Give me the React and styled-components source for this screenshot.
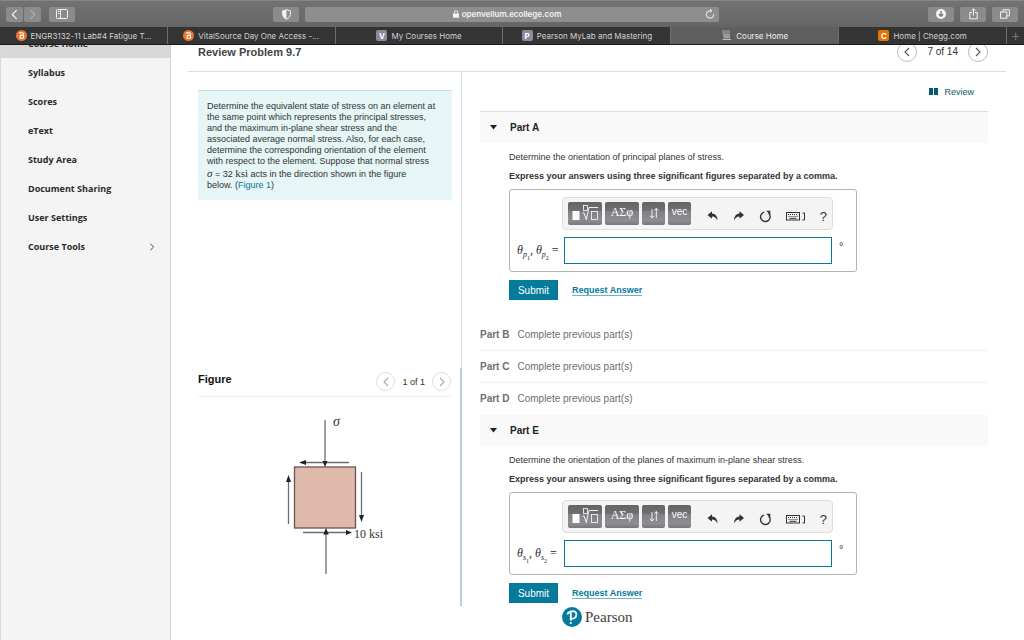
import React, { useState } from "react";
import styled, { createGlobalStyle } from "styled-components";

const GlobalStyle = createGlobalStyle`
    *{
        box-sizing: border-box;
    }

    body{
        margin: 0;
        background-color: white;
        color: #2b2b2b;
        font-family: "Liberation Sans", Arial, sans-serif;
        font-size: 9px;
        line-height: 12px;
    }

    button, input{
        font-family: inherit;
        margin: 0;
        padding: 0;
    }

    h1, h2, p, ul{
        margin: 0;
        padding: 0;
    }
`

// browser chrome
const Window = styled.div`
    display: flex;
    flex-direction: column;
    height: 100vh;
    overflow: hidden;
`

const Toolbar = styled.header`
    display: flex;
    flex: none;
    align-items: center;
    gap: 6px;
    height: 27px;
    padding: 0 6px;
    border-top: 1px solid #858585;
    background: linear-gradient(#727272, #656565);
`

const ToolGroup = styled.div`
    display: flex;
    flex: ${props => props.$grow} 1 0;
    gap: ${props => props.$gap};
    justify-content: ${props => props.$align || 'flex-end'};
`

const NavButtons = styled.div`
    display: flex;
    gap: 8px;
`

const NavPair = styled.div`
    display: flex;
    gap: 1px;
`

const ToolButton = styled.button`
    display: flex;
    align-items: center;
    justify-content: center;
    width: ${props => props.$small ? '17px' : '26px'};
    height: 15px;
    border: none;
    border-radius: 2px;
    background-color: #8b8b8b;
    color: ${props => props.$dim ? '#b0b0b0' : '#f2f2f2'};
`

const AddressBar = styled.div`
    display: flex;
    flex: 406 1 0;
    align-items: center;
    height: 15px;
    margin-right: -6px;
    padding: 0 4px;
    border-radius: 2px;
    background-color: #8e8e8e;
    color: #f4f4f4;
`

const Address = styled.span`
    display: flex;
    flex: 1;
    align-items: center;
    justify-content: center;
    gap: 3px;
    font-family: Inter, sans-serif;
    font-size: 8px;
    font-weight: 600;
`

const PlainButton = styled.button`
    display: flex;
    border: none;
    background: none;
    color: inherit;
`

const TabBar = styled.nav`
    display: flex;
    flex: none;
    height: 18px;
    border-bottom: 1px solid #1b1b1b;
    background-color: #343434;
`

const Tab = styled.a`
    display: flex;
    flex: 1 1 0;
    align-items: center;
    justify-content: center;
    gap: 4px;
    min-width: 0;
    border-right: 1px solid #6d6d6d;
    background-color: ${props => props.$active ? '#5e5e5e' : 'transparent'};
    color: ${props => props.$active ? '#eeeeee' : '#d2d2d2'};
    font-family: Inter, sans-serif;
    font-size: 8px;
    font-weight: 400;
    text-decoration: none;
    white-space: nowrap;
`

const NewTab = styled.button`
    width: 17px;
    border: none;
    background: none;
    color: #777777;
    font-size: 14px;
    line-height: 16px;
`

// page
const Page = styled.div`
    display: flex;
    flex: 1;
    min-height: 0;
    overflow: hidden;
`

const Sidebar = styled.nav`
    flex: none;
    width: 171px;
    border-left: 1px solid #dadada;
    border-right: 1px solid #d2d2d2;
    background-color: #f4f4f4;

    & ul{
        margin-top: -16px;
        list-style: none;
    }
`

const MenuLink = styled.a`
    display: flex;
    align-items: center;
    justify-content: space-between;
    height: 29px;
    padding: 0 14px 0 27px;
    background-color: ${props => props.$current ? '#d8d8d8' : 'transparent'};
    color: #2a2a2a;
    font-family: "Open Sans", sans-serif;
    font-size: 9px;
    font-weight: 700;
    text-decoration: none;
`

const Main = styled.main`
    flex: 1;
    min-width: 0;
    padding: 0 18px 0 17px;
`

const TitleRow = styled.div`
    display: flex;
    align-items: center;
    justify-content: space-between;
    height: 40px;
    margin-top: -13px;
    padding: 0 18px 0 10px;
    border-bottom: 1px solid #dcdcdc;
`

const Title = styled.h1`
    color: #444444;
    font-size: 11px;
    font-weight: 700;
`

const Pager = styled.div`
    display: flex;
    align-items: center;
    gap: ${props => props.$small ? '7px' : '10px'};
    color: #333333;
    font-size: ${props => props.$small ? '9px' : '10px'};
`

const RoundButton = styled.button`
    display: flex;
    align-items: center;
    justify-content: center;
    width: ${props => props.$small ? '19px' : '20px'};
    height: ${props => props.$small ? '19px' : '20px'};
    border: 1px solid ${props => props.$small ? '#dedede' : '#bcbcbc'};
    border-radius: 50%;
    background-color: white;
    color: ${props => props.$small ? '#aaaaaa' : '#555555'};
`

const Columns = styled.div`
    display: flex;
    align-items: flex-start;
`

const LeftColumn = styled.div`
    flex: none;
    width: 274px;
`

const ProblemPane = styled.section`
    height: 296px;
    padding: 18px 9px 0 10px;
    border-right: 1px solid #d9dfe8;
`

const Serif = styled.span`
    font-family: "Liberation Serif", "Times New Roman", serif;
    font-size: ${props => props.$size || '11px'};
    font-style: ${props => props.$italic ? 'italic' : 'normal'};
`

const Problem = styled.p`
    padding: 10px 14px 9px 9px;
    border-top: 1px solid #d0dada;
    background-color: #e6f5f5;
    color: #333333;
    line-height: 11px;

    & ${Serif}{
        line-height: 13px;
    }
`

const FigureLink = styled.a`
    color: #047a9c;
    text-decoration: none;
`

const FigurePane = styled.section`
    height: 238px;
    padding: 4px 9px 0 10px;
    border-right: 2px solid #bccbdc;
`

const FigureHead = styled.div`
    display: flex;
    align-items: flex-start;
    justify-content: space-between;
    height: 25px;
    border-bottom: 1px solid #eeeeee;

    & h2{
        padding-top: 1px;
        color: #111111;
        font-size: 11px;
    }
`

const Drawing = styled.svg`
    display: block;
    margin: 18px 0 0 87px;
`

const RightColumn = styled.div`
    flex: 1;
    min-width: 0;
    padding: 0 18px 0 18px;
`

const ReviewRow = styled.div`
    display: flex;
    align-items: center;
    justify-content: flex-end;
    height: 39px;
    padding-right: 14px;

    & a{
        display: flex;
        align-items: center;
        gap: 6px;
        color: #055b70;
        text-decoration: none;
    }
`

const PartHead = styled.h2`
    border-top: ${props => props.$line ? '1px solid #dcdcdc' : 'none'};
    background-color: #f9f9f9;

    & button{
        display: flex;
        align-items: center;
        gap: 13px;
        width: 100%;
        height: 31px;
        padding-left: 10px;
        border: none;
        background: none;
        color: #222222;
        font-size: 10px;
        font-weight: 700;
    }
`

const PartBody = styled.form`
    padding: 8px 0 0 29px;
`

const Question = styled.p`
    margin-bottom: 7px;
    color: #333333;
    font-weight: ${props => props.$bold ? 700 : 400};
`

const AnswerBox = styled.div`
    display: grid;
    grid-template-columns: 45px 1fr 16px;
    row-gap: 7px;
    max-width: 348px;
    padding: 7px;
    border: 1px solid #b3b3b3;
    border-radius: 3px;
`

const MathBar = styled.div`
    display: flex;
    grid-column: 2;
    align-items: center;
    justify-content: space-between;
    height: 33px;
    padding: 0 5px;
    border: 1px solid #dedede;
    border-radius: 4px;
    background-color: #f4f4f4;
`

const MathKeys = styled.div`
    display: flex;
    gap: 3px;
`

const MathKey = styled.button`
    display: flex;
    justify-content: center;
    width: ${props => props.$wide ? '34px' : '23px'};
    height: 23px;
    padding-top: 3px;
    border: none;
    border-radius: 2px;
    background: linear-gradient(#646466 0%, #717174 40%, #808086 41%, #8d8d94 80%, #77777b 100%);
    color: white;
    font-size: 10px;
    line-height: 14px;
`

const MathTools = styled.div`
    display: flex;
    align-items: center;
    gap: 14px;
    padding-top: 5px;
    color: #333333;
`

const Help = styled(PlainButton)`
    font-size: 13px;
`

const AnswerLabel = styled.label`
    grid-column: 1;
    align-self: center;
    font-family: "Liberation Serif", "Times New Roman", serif;
    font-size: 12px;
    line-height: 12px;
    white-space: nowrap;

    & sub{
        font-size: 8px;
        line-height: 0;
    }

    & sub sub{
        font-size: 6px;
        font-style: normal;
    }
`

const AnswerInput = styled.input`
    width: calc(100% - 3px);
    height: 27px;
    justify-self: center;
    padding: 0 4px;
    border: 1px solid #047a9c;
    background-color: white;
    font-size: 12px;
`

const Unit = styled.span`
    padding: 3px 0 0 6px;
    font-size: 11px;
`

const Actions = styled.div`
    display: flex;
    align-items: center;
    gap: 14px;
    padding-top: 8px;
`

const Submit = styled.button`
    width: 49px;
    height: 20px;
    border: none;
    background-color: #047a9c;
    color: white;
    font-size: 10px;
`

const RequestLink = styled.a`
    border-bottom: 1px solid #6fb3c6;
    color: #047a9c;
    font-weight: 700;
    line-height: 10px;
    text-decoration: none;
`

const LockedParts = styled.div`
    padding-top: 19px;
`

const LockedPart = styled.p`
    display: flex;
    align-items: center;
    gap: 8px;
    height: 32px;
    border-bottom: 1px solid #f1f1f1;
    color: #6a7070;
    font-size: 10px;

    &:last-child{
        border-bottom: none;
    }
`

const Brand = styled.footer`
    display: flex;
    align-items: center;
    gap: 3px;
    padding: 4px 0 0 82px;
    color: #3d3d3d;
    font-family: "Liberation Serif", "Times New Roman", serif;
    font-size: 15px;
`

const Chevron = ({ left, size = 10 }) => (
  <svg width={size} height={size} viewBox="0 0 10 10" fill="none" stroke="currentColor" strokeWidth="1.1">
    <path d={left ? "M7 1L3 5L7 9" : "M3 1L7 5L3 9"} />
  </svg>
)

const BlackboardIcon = () => (
  <svg width="11" height="11" viewBox="0 0 11 11">
    <circle cx="5.5" cy="5.5" r="5.5" fill="#e8762c" />
    <path d="M3.2 2.8H6Q7.4 2.8 7.4 4.1Q7.4 5.3 6.2 5.4H4.2M6.2 5.4Q7.8 5.6 7.8 6.9Q7.8 8.3 6.2 8.3H4.2V5M4.2 2.8V3.8" fill="none" stroke="#fff" strokeWidth="1.1" />
  </svg>
)

const Badge = styled.span`
    display: flex;
    align-items: center;
    justify-content: center;
    width: 11px;
    height: 11px;
    border-radius: 2px;
    background-color: ${props => props.$color};
    color: white;
    font-size: 8px;
    font-weight: 700;
`

const CourseIcon = () => (
  <svg width="11" height="11" viewBox="0 0 11 11">
    <path d="M1 0.5H9V8.5H2.5Z" fill="#9b9b9b" />
    <path d="M1 0.5H9V4H1.6Z" fill="#858585" />
    <path d="M1.5 9.5H10" stroke="#bbbbbb" strokeWidth="1" />
  </svg>
)

const tabs = [
  { title: 'ENGR3132-11 Lab#4 Fatigue T...', icon: <BlackboardIcon /> },
  { title: 'VitalSource Day One Access -...', icon: <BlackboardIcon /> },
  { title: 'My Courses Home', icon: <Badge $color="#8b8b9c">V</Badge> },
  { title: 'Pearson MyLab and Mastering', icon: <Badge $color="#8b8b9c">P</Badge> },
  { title: 'Course Home', icon: <CourseIcon />, active: true },
  { title: 'Home | Chegg.com', icon: <Badge $color="#eb7100">C</Badge> },
];

const menu = ['Course Home', 'Syllabus', 'Scores', 'eText', 'Study Area', 'Document Sharing', 'User Settings', 'Course Tools'];

const Browser = () => (
  <>
    <Toolbar>
      <ToolGroup $grow={293} $align="space-between">
        <NavButtons>
          <NavPair>
            <ToolButton $small aria-label="Back"><Chevron left size={11} /></ToolButton>
            <ToolButton $small $dim aria-label="Forward"><Chevron size={11} /></ToolButton>
          </NavPair>
          <ToolButton aria-label="Sidebar">
            <svg width="12" height="10" viewBox="0 0 12 10" fill="none" stroke="currentColor">
              <rect x="0.5" y="0.5" width="11" height="9" rx="1" />
              <path d="M4.5 1V9M2 2.5H3.5M2 4.5H3.5" />
            </svg>
          </ToolButton>
        </NavButtons>
        <ToolButton aria-label="Privacy report">
          <svg width="9" height="11" viewBox="0 0 9 11">
            <path d="M4.5 0.7L8.4 1.9V5.5Q8.2 8.6 4.5 10.3Q0.8 8.6 0.6 5.5V1.9Z" fill="none" stroke="#f2f2f2" />
            <path d="M4.5 0.7V10.3Q0.8 8.6 0.6 5.5V1.9Z" fill="#f2f2f2" />
          </svg>
        </ToolButton>
      </ToolGroup>
      <AddressBar>
        <Address>
          <svg width="6" height="8" viewBox="0 0 6 8">
            <rect y="3.4" width="6" height="4.4" rx="0.6" fill="currentColor" />
            <path d="M1.3 4V2.4Q1.3 0.7 3 0.7Q4.7 0.7 4.7 2.4V4" fill="none" stroke="currentColor" />
          </svg>
          openvellum.ecollege.com
        </Address>
        <PlainButton aria-label="Reload">
          <svg width="10" height="10" viewBox="0 0 10 10" fill="none" stroke="currentColor">
            <path d="M8.7 5.3A3.7 3.7 0 1 1 5 1.8H6.5" />
            <path d="M4.9 0L6.8 1.8L4.9 3.6" />
          </svg>
        </PlainButton>
      </AddressBar>
      <ToolGroup $grow={299} $gap="6px">
        <ToolButton aria-label="Downloads">
          <svg width="10" height="10" viewBox="0 0 10 10">
            <circle cx="5" cy="5" r="5" fill="#f4f4f4" />
            <path d="M5 2V7M2.8 5L5 7.3L7.2 5" fill="none" stroke="#777777" strokeWidth="1.3" />
          </svg>
        </ToolButton>
        <ToolButton aria-label="Share">
          <svg width="9" height="12" viewBox="0 0 9 12" fill="none" stroke="currentColor">
            <path d="M3 4.5H0.8V10.8H8.2V4.5H6M4.5 7.5V1M2.6 2.7L4.5 0.8L6.4 2.7" />
          </svg>
        </ToolButton>
        <ToolButton aria-label="Show tabs">
          <svg width="10" height="10" viewBox="0 0 10 10" fill="none" stroke="currentColor">
            <rect x="0.6" y="3" width="6.2" height="6.2" />
            <path d="M3 3V0.8H9.3V7H6.8" />
          </svg>
        </ToolButton>
      </ToolGroup>
    </Toolbar>
    <TabBar>
      {tabs.map(tab => (
        <Tab key={tab.title} href="#" $active={tab.active}>
          {tab.icon}
          {tab.title}
        </Tab>
      ))}
      <NewTab aria-label="New tab">+</NewTab>
    </TabBar>
  </>
)

const StressFigure = () => (
  <Drawing width="100" height="165" viewBox="0 0 100 165" role="img" aria-label="Stress element">
    <rect x="9.5" y="52" width="61" height="61" fill="#e0b9ad" stroke="#6b5350" strokeWidth="1.3" />
    <g stroke="#6e6e6e" strokeWidth="1.3">
      <path d="M40 5V47M41 159V118M64 47.5H20M3.5 109V67M76.5 57V101M18 117.5H62" />
    </g>
    <g fill="#222222">
      <path d="M37.5 46H42.5L40 52Z" />
      <path d="M38.3 119.5H43.7L41 113Z" />
      <path d="M21 45V50L14 47.5Z" />
      <path d="M1 67H6L3.5 60Z" />
      <path d="M74 100H79L76.5 107Z" />
      <path d="M61 115V120L67 117.5Z" />
    </g>
    <g fill="#333333" fontFamily="Liberation Serif, serif">
      <text x="48" y="11" fontSize="14" fontStyle="italic">σ</text>
      <text x="69" y="123" fontSize="12">10 ksi</text>
    </g>
  </Drawing>
)

const SymbolBar = () => (
  <MathBar>
    <MathKeys>
      <MathKey type="button" $wide aria-label="Templates">
        <svg width="26" height="17" viewBox="0 0 26 17" fill="none" stroke="#fff">
          <rect x="0.5" y="6" width="7" height="9" fill="#fff" stroke="none" />
          <rect x="11.5" y="0.5" width="4" height="5" strokeWidth="0.8" />
          <path d="M10.5 8.5L12 7.8L14.3 14.5L17 2.5H26" strokeWidth="0.9" />
          <rect x="19.5" y="6.5" width="6" height="8" strokeWidth="0.8" />
        </svg>
      </MathKey>
      <MathKey type="button" $wide><Serif $size="12px">ΑΣφ</Serif></MathKey>
      <MathKey type="button" aria-label="Sub and superscript">
        <svg width="10" height="14" viewBox="0 0 10 14" fill="none" stroke="#fff" strokeWidth="0.9">
          <path d="M3 4V13M1 10.8L3 13L5 10.8M7.3 13V3.5M5.3 5.7L7.3 3.5L9.3 5.7" />
        </svg>
      </MathKey>
      <MathKey type="button">vec</MathKey>
    </MathKeys>
    <MathTools>
      <PlainButton type="button" aria-label="Undo">
        <svg width="12" height="10" viewBox="0 0 12 10" fill="currentColor">
          <path d="M0.5 4L5 0.3V2.6Q10.5 3 10.3 9.5Q8.8 5.8 5 5.6V7.8Z" />
        </svg>
      </PlainButton>
      <PlainButton type="button" aria-label="Redo">
        <svg width="12" height="10" viewBox="0 0 12 10" fill="currentColor">
          <path d="M11 4L6.5 0.3V2.6Q1 3 1.2 9.5Q2.7 5.8 6.5 5.6V7.8Z" />
        </svg>
      </PlainButton>
      <PlainButton type="button" aria-label="Reset">
        <svg width="13" height="13" viewBox="0 0 13 13" fill="none" stroke="currentColor" strokeWidth="1.4">
          <path d="M9.6 3.2A4.8 4.8 0 1 1 5.2 2.1" />
          <path d="M7.2 0.8H11.3V5Z" fill="currentColor" stroke="none" />
        </svg>
      </PlainButton>
      <PlainButton type="button" aria-label="Keyboard">
        <svg width="20" height="9" viewBox="0 0 20 9" fill="none" stroke="currentColor">
          <rect x="0.5" y="0.5" width="13" height="7.5" />
          <path d="M2 2.5H12M2.5 4.5H12" strokeDasharray="1 1" />
          <path d="M3.5 6.3H10.5" />
          <path d="M16.5 1H18.5V8H16.5" />
        </svg>
      </PlainButton>
      <Help type="button">?</Help>
    </MathTools>
  </MathBar>
)

const Part = ({ name, letter, question, line }) => {
  const [answer, setAnswer] = useState('');
  const id = `answer-${name}`;

  return (
    <section>
      <PartHead $line={line}>
        <button type="button">
          <svg width="7" height="5" viewBox="0 0 7 5"><path d="M0 0H7L3.5 4.5Z" fill="currentColor" /></svg>
          Part {name}
        </button>
      </PartHead>
      <PartBody onSubmit={e => e.preventDefault()}>
        <Question>{question}</Question>
        <Question $bold>Express your answers using three significant figures separated by a comma.</Question>
        <AnswerBox>
          <SymbolBar />
          <AnswerLabel htmlFor={id}>
            <i>θ<sub>{letter}<sub>1</sub></sub></i>, <i>θ<sub>{letter}<sub>2</sub></sub></i> =
          </AnswerLabel>
          <AnswerInput id={id} value={answer} onChange={e => setAnswer(e.target.value)} />
          <Unit>°</Unit>
        </AnswerBox>
        <Actions>
          <Submit>Submit</Submit>
          <RequestLink href="#">Request Answer</RequestLink>
        </Actions>
      </PartBody>
    </section>
  );
}

export default function App() {
  return (
    <Window>
      <GlobalStyle />
      <Browser />
      <Page>
        <Sidebar>
          <ul>
            {menu.map((item, index) => (
              <li key={item}>
                <MenuLink href="#" $current={index === 0}>
                  {item}
                  {item === 'Course Tools' && <Chevron size={8} />}
                </MenuLink>
              </li>
            ))}
          </ul>
        </Sidebar>

        <Main>
          <TitleRow>
            <Title>Review Problem 9.7</Title>
            <Pager>
              <RoundButton aria-label="Previous item"><Chevron left /></RoundButton>
              7 of 14
              <RoundButton aria-label="Next item"><Chevron /></RoundButton>
            </Pager>
          </TitleRow>

          <Columns>
            <LeftColumn>
              <ProblemPane>
                <Problem>
                  Determine the equivalent state of stress on an element at the same point which represents
                  the principal stresses, and the maximum in-plane shear stress and the associated average
                  normal stress. Also, for each case, determine the corresponding orientation of the element
                  with respect to the element. Suppose that normal stress <Serif $italic>σ</Serif>&nbsp;=&nbsp;32 <Serif>ksi</Serif> acts
                  in the direction shown in the figure below.&nbsp;(<FigureLink href="#figure">Figure 1</FigureLink>)
                </Problem>
              </ProblemPane>
              <FigurePane id="figure">
                <FigureHead>
                  <h2>Figure</h2>
                  <Pager $small>
                    <RoundButton $small aria-label="Previous figure"><Chevron left /></RoundButton>
                    1 of 1
                    <RoundButton $small aria-label="Next figure"><Chevron /></RoundButton>
                  </Pager>
                </FigureHead>
                <StressFigure />
              </FigurePane>
            </LeftColumn>

            <RightColumn>
              <ReviewRow>
                <a href="#">
                  <svg width="9" height="7" viewBox="0 0 9 7" fill="currentColor">
                    <path d="M0 0H4V7H0ZM5 0H9V7H5Z" />
                  </svg>
                  Review
                </a>
              </ReviewRow>
              <Part name="A" letter="p" line question="Determine the orientation of principal planes of stress." />
              <LockedParts>
                {['B', 'C', 'D'].map(name => (
                  <LockedPart key={name}><b>Part {name}</b> Complete previous part(s)</LockedPart>
                ))}
              </LockedParts>
              <Part name="E" letter="s" question="Determine the orientation of the planes of maximum in-plane shear stress." />
              <Brand>
                <svg width="20" height="20" viewBox="0 0 20 20">
                  <circle cx="10" cy="10" r="10" fill="#047a9c" />
                  <path d="M5.2 7.4Q7 4.2 10.8 4.2Q14.4 4.4 14.4 7.8Q14.2 11.6 9.4 11.8" fill="none" stroke="#fff" strokeWidth="1.7" />
                  <path d="M8.8 5.4V13.6" stroke="#fff" strokeWidth="1.9" />
                  <circle cx="8.8" cy="16" r="1.1" fill="#fff" />
                </svg>
                Pearson
              </Brand>
            </RightColumn>
          </Columns>
        </Main>
      </Page>
    </Window>
  );
}
